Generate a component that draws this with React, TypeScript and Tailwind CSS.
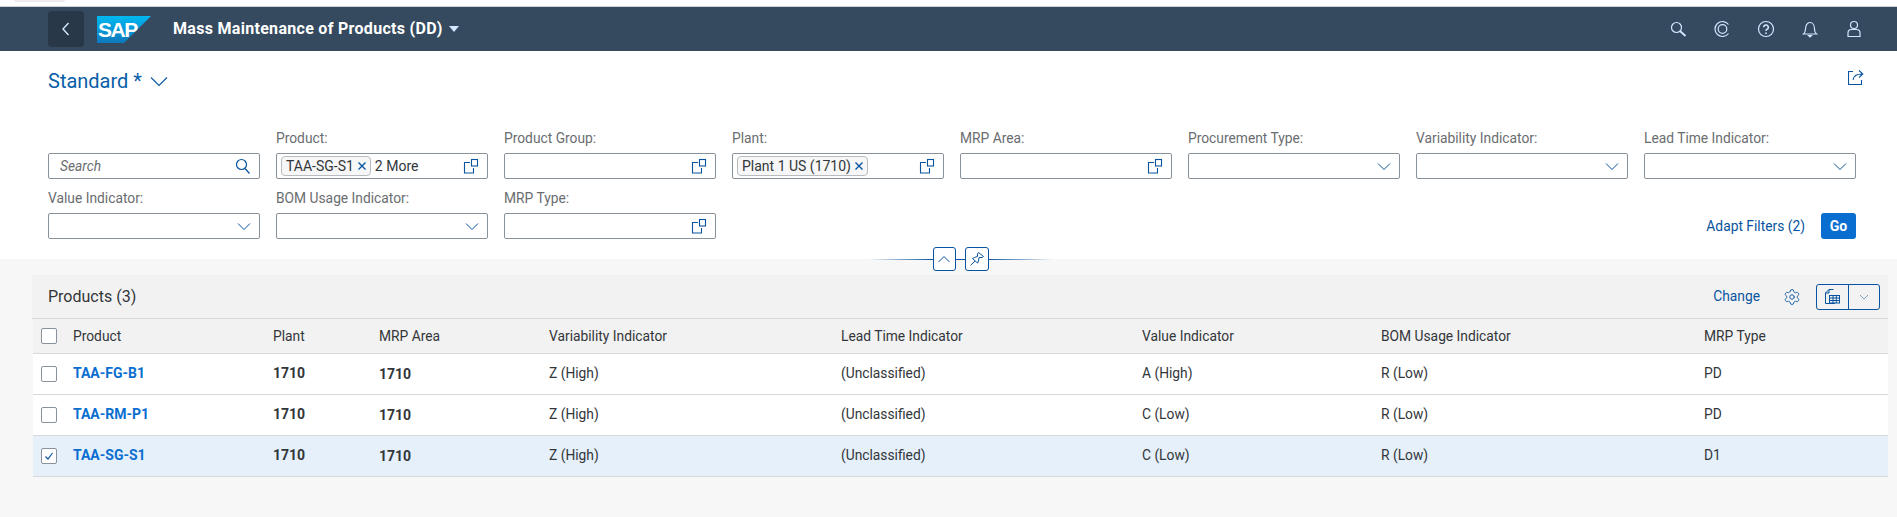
import type { ReactNode } from 'react';
import { Settings } from 'lucide-react';

type Row = {
  product: string;
  value: string;
  mrpType: string;
  selected?: boolean;
};

const rows: Row[] = [
  { product: 'TAA-FG-B1', value: 'A (High)', mrpType: 'PD' },
  { product: 'TAA-RM-P1', value: 'C (Low)', mrpType: 'PD' },
  { product: 'TAA-SG-S1', value: 'C (Low)', mrpType: 'D1', selected: true },
];

const columns = 'grid grid-cols-[40px_200px_106px_170px_292px_301px_239px_323px_1fr] items-center';

function ValueHelpIcon() {
  return (
    <svg width="16" height="16" viewBox="0 0 16 16" fill="none" stroke="#0854a0" strokeWidth="1.1">
      <rect x="8.500" y="1.500" width="6" height="6.500" />
      <path d="M7 4.500H1.500V15H10.500V10" />
    </svg>
  );
}

function ChevronDown() {
  return (
    <svg width="14" height="14" viewBox="0 0 14 14" fill="none" stroke="#0854a0" strokeWidth="1">
      <path d="M1 4.500 7 10.500l6-6" />
    </svg>
  );
}

function Token({ children }: { children: ReactNode }) {
  return (
    <span className="flex h-[20px] items-center gap-[3px] rounded-[4px] border border-[#b8bcc0] bg-[#f7f7f7] pl-[4px] pr-[3px] text-[14px] text-[#32363a]">
      {children}
      <svg width="10" height="10" viewBox="0 0 10 10" fill="none" stroke="#0854a0" strokeWidth="1.400">
        <path d="M1.500 1.500l7 7M8.500 1.500l-7 7" />
      </svg>
    </span>
  );
}

function Field({ label, kind, children }: { label: string; kind: 'help' | 'select'; children?: ReactNode }) {
  return (
    <div className="flex flex-col">
      <label className="mb-[5px] h-[20px] text-[13.8px] leading-[20px] text-[#6a6d70]">{label}</label>
      <div className="flex h-[26px] items-center justify-between rounded-[2px] border border-[#89919a] bg-white pl-[4px] pr-[8px]">
        <div className="flex items-center gap-[4px] text-[14px] text-[#32363a]">{children}</div>
        {kind === 'help' ? <ValueHelpIcon /> : <ChevronDown />}
      </div>
    </div>
  );
}

function Checkbox({ checked }: { checked?: boolean }) {
  return (
    <span className="ml-[8px] flex h-[16px] w-[16px] items-center justify-center rounded-[2px] border border-[#89919a] bg-white">
      {checked && (
        <svg width="12" height="12" viewBox="0 0 12 12" fill="none" stroke="#0854a0" strokeWidth="1.200">
          <path d="M2.500 6.500 5 9l4.500-6" />
        </svg>
      )}
    </span>
  );
}

function SapLogo() {
  return (
    <svg width="54" height="27" viewBox="0 0 54 27">
      <defs>
        <linearGradient id="sapBlue" x1="0" y1="0" x2="0" y2="1">
          <stop offset="0" stopColor="#00b8f1" />
          <stop offset="1" stopColor="#0f78bd" />
        </linearGradient>
      </defs>
      <polygon points="0,0 54,0 27,27 0,27" fill="url(#sapBlue)" />
      <text x="1" y="21" fill="#fff" fontSize="21" fontWeight="700" letterSpacing="-1.500" fontFamily="'Liberation Sans', sans-serif">
        SAP
      </text>
    </svg>
  );
}

function ShellIcons() {
  const p = { fill: 'none', stroke: '#d1e8ff', strokeWidth: 1.2, viewBox: '0 0 18 18', className: 'h-[18px] w-[18px]' };
  return (
    <div className="ml-auto mr-[34px] flex items-center gap-[26px]">
      <svg {...p}>
        <circle cx="7.500" cy="7.500" r="5" />
        <path d="M11 11l5.500 5" strokeWidth="1.800" />
      </svg>
      <svg {...p}>
        <path d="M15.500 4.500A7.500 7.500 0 1 0 15.500 13.500" />
        <circle cx="9.500" cy="9" r="4.300" />
      </svg>
      <svg {...p}>
        <circle cx="9" cy="9" r="7.500" />
        <path d="M6.700 7.200A2.300 2.300 0 1 1 9.800 9.400c-.6.3-.8.7-.8 1.600" strokeWidth="1.500" />
        <path d="M9 12.400v1.600" strokeWidth="1.600" />
      </svg>
      <svg {...p}>
        <path d="M2.500 14c1.600-1.300 2-2.700 2-5 0-3.300 1.600-6.500 4.500-6.500s4.500 3.200 4.500 6.500c0 2.300.4 3.700 2 5z" />
        <path d="M7.500 15.500h3l-1.500 1.500z" fill="#d1e8ff" />
      </svg>
      <svg {...p}>
        <circle cx="9" cy="5" r="3.500" />
        <path d="M3 16.500v-3.500c0-2 1.500-3.500 3.500-3.500h5c2 0 3.500 1.500 3.500 3.500v3.500z" />
      </svg>
    </div>
  );
}

function TableRow({ row }: { row: Row }) {
  return (
    <div className={`${columns} ml-px h-[41px] border-b border-[#d9d9d9] text-[13.8px] text-[#32363a] ${row.selected ? 'bg-[#e5f0fa]' : 'bg-white'}`}>
      <Checkbox checked={row.selected} />
      <a className="pb-[2px] text-[14px] font-bold text-[#0a6ed1]">{row.product}</a>
      <span className="pb-[2px] text-[14px] font-bold">1710</span>
      <span className="text-[14px] font-bold">1710</span>
      <span className="pb-[2px]">Z (High)</span>
      <span className="pb-[2px]">(Unclassified)</span>
      <span className="pb-[2px]">{row.value}</span>
      <span className="pb-[2px]">R (Low)</span>
      <span className="pb-[2px]">{row.mrpType}</span>
    </div>
  );
}

export default function App() {
  return (
    <div className="h-[517px] w-[1897px] overflow-hidden bg-[#f7f7f7] font-['Roboto',sans-serif] text-[#32363a]">
      <div className="h-[7px] border-b border-[#d0d0d0] bg-white">
        <div className="ml-[14px] h-[2px] w-[51px] rounded-b-full bg-[#ececec]" />
      </div>

      <header className="flex h-[44px] items-center bg-[#354a5f] pl-[48px]">
        <button className="flex h-[36px] w-[36px] items-center justify-center rounded-[4px] bg-[#283848]">
          <svg width="16" height="16" viewBox="0 0 16 16" fill="none" stroke="#d1e8ff" strokeWidth="1.400">
            <path d="M10.500 2 5 8l5.500 6" />
          </svg>
        </button>
        <div className="ml-[13px]">
          <SapLogo />
        </div>
        <h1 className="ml-[22px] text-[16px] font-bold tracking-[0.3px] text-white">Mass Maintenance of Products (DD)</h1>
        <svg className="ml-[6px]" width="10" height="6" viewBox="0 0 10 6">
          <path d="M0 0h10L5 6z" fill="#d1e8ff" />
        </svg>
        <ShellIcons />
      </header>

      <section className="relative h-[208px] bg-white pl-[48px]">
        <div className="flex items-start justify-between pr-[33px] pt-[18px]">
          <div className="flex h-[24px] items-center gap-[8px] text-[20px] text-[#0a5ea8]">
            Standard *
            <svg width="18" height="18" viewBox="0 0 18 18" fill="none" stroke="#0854a0" strokeWidth="1.100">
              <path d="M1 5.500 9 13.500l8-8" />
            </svg>
          </div>
          <svg width="16" height="16" viewBox="0 0 16 16" fill="none" stroke="#0854a0" strokeWidth="1.100">
            <path d="M5 2.500H.5v13h13V11" />
            <path d="M5 11c.5-4 3-6 9-6M11 1.500 14.800 5 11 8.500" />
          </svg>
        </div>

        <div className="mt-[35px] grid grid-cols-[repeat(8,212px)] gap-x-[16px] gap-y-[9px]">
          <div className="flex flex-col justify-end">
            <div className="flex h-[26px] items-center justify-between rounded-[2px] border border-[#89919a] pl-[11px] pr-[8px]">
              <span className="text-[13.8px] italic text-[#6a6d70]">Search</span>
              <svg width="16" height="16" viewBox="0 0 16 16" fill="none" stroke="#0854a0" strokeWidth="1.200">
                <circle cx="6.500" cy="6.500" r="5" />
                <path d="M10 10.500l4.500 5" />
              </svg>
            </div>
          </div>
          <Field label="Product:" kind="help">
            <Token>TAA-SG-S1</Token>
            <span>2 More</span>
          </Field>
          <Field label="Product Group:" kind="help" />
          <Field label="Plant:" kind="help">
            <Token>Plant 1 US (1710)</Token>
          </Field>
          <Field label="MRP Area:" kind="help" />
          <Field label="Procurement Type:" kind="select" />
          <Field label="Variability Indicator:" kind="select" />
          <Field label="Lead Time Indicator:" kind="select" />
          <Field label="Value Indicator:" kind="select" />
          <Field label="BOM Usage Indicator:" kind="select" />
          <Field label="MRP Type:" kind="help" />
          <div className="col-span-5 flex items-end justify-end gap-[16px]">
            <a className="flex h-[26px] items-center text-[13.8px] text-[#0854a0]">Adapt Filters (2)</a>
            <button className="h-[26px] w-[35px] rounded-[3px] bg-[#0a6ed1] text-[14px] font-bold text-white">Go</button>
          </div>
        </div>

        <div className="absolute bottom-[-12px] left-[869px] flex h-[24px] w-[183px] items-center justify-center bg-[linear-gradient(90deg,transparent,#0854a0_35%,#0854a0_65%,transparent)] bg-[length:100%_1px] bg-center bg-no-repeat">
          <button className="flex h-[24px] w-[23px] items-center justify-center rounded-[3px] border border-[#0854a0] bg-white">
            <svg width="14" height="14" viewBox="0 0 14 14" fill="none" stroke="#0854a0" strokeWidth="1">
              <path d="M1.500 10 7 4.500 12.500 10" />
            </svg>
          </button>
          <button className="ml-[9px] flex h-[24px] w-[24px] items-center justify-center rounded-[3px] border border-[#0854a0] bg-white">
            <svg width="16" height="16" viewBox="0 0 16 16" fill="none" stroke="#0854a0" strokeWidth="1">
              <path d="M9.500 1.500 14.500 5.500 13 6.500 10 6.500 9.500 10 8.500 12 3.500 7.500 5.500 6.500 8.500 5.500 8.500 3zM6 10l-4.500 4.500" />
            </svg>
          </button>
        </div>
      </section>

      <section className="ml-[32px] mr-[9px] mt-[16px]">
        <div className="flex h-[44px] items-center border-b border-[#d9d9d9] bg-[#f2f2f2] pl-[16px] pr-[8px]">
          <h2 className="text-[16px] text-[#32363a]">Products (3)</h2>
          <a className="ml-auto text-[13.8px] text-[#0854a0]">Change</a>
          <Settings className="ml-[23px]" size={18} strokeWidth={1.2} color="#0854a0" />
          <div className="ml-[15px] flex h-[26px] w-[64px] rounded-[3px] border border-[#0854a0]">
            <span className="flex w-[32px] items-center justify-center border-r border-[#0854a0]">
              <svg width="17" height="17" viewBox="0 0 17 17" fill="none" stroke="#0854a0" strokeWidth="1">
                <path d="M9.500 1.500H5L1.500 5V15.500H11" />
                <path d="M5 1.500V5H1.500" />
                <rect x="5.500" y="7.500" width="10" height="7.500" />
                <path d="M5.500 10h10M5.500 12.500h10M9 7.500v7.500M12.300 7.500v7.500" />
              </svg>
            </span>
            <span className="flex flex-1 items-center justify-center">
              <svg width="10" height="10" viewBox="0 0 10 10" fill="none" stroke="#7f9fc0" strokeWidth="1">
                <path d="M1 3l4 4 4-4" />
              </svg>
            </span>
          </div>
        </div>
        <div className={`${columns} ml-px h-[35px] border-b border-[#d9d9d9] bg-[#f2f2f2] text-[13.8px] text-[#32363a]`}>
          <Checkbox />
          <span>Product</span>
          <span>Plant</span>
          <span>MRP Area</span>
          <span>Variability Indicator</span>
          <span>Lead Time Indicator</span>
          <span>Value Indicator</span>
          <span>BOM Usage Indicator</span>
          <span>MRP Type</span>
        </div>
        {rows.map((row) => (
          <TableRow key={row.product} row={row} />
        ))}
      </section>
    </div>
  );
}
